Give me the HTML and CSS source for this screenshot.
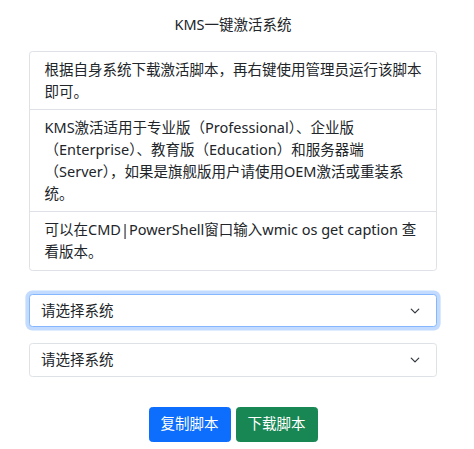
FILE: index.html
```html
<!DOCTYPE html>
<html lang="zh-CN">
<head>
<meta charset="utf-8">
<title>KMS一键激活系统</title>
<link rel="stylesheet" href="styles.css">
</head>
<body>
<div class="page">
  <div class="title">KMS一键激活系统</div>
  <ul class="list-group">
    <li class="list-item">根据自身系统下载激活脚本，再右键使用管理员运行该脚本即可。</li>
    <li class="list-item">KMS激活适用于专业版（Professional）、企业版（Enterprise）、教育版（Education）和服务器端（Server），如果是旗舰版用户请使用OEM激活或重装系统。</li>
    <li class="list-item">可以在CMD|PowerShell窗口输入wmic os get caption 查看版本。</li>
  </ul>
  <div class="select focused">
    <span class="select-text">请选择系统</span>
    <svg class="chevron" width="14" height="10" viewBox="0 0 16 16"><path d="M2 5l6 6 6-6" fill="none" stroke="#343a40" stroke-width="2" stroke-linecap="round" stroke-linejoin="round"/></svg>
  </div>
  <div class="select">
    <span class="select-text">请选择系统</span>
    <svg class="chevron" width="14" height="10" viewBox="0 0 16 16"><path d="M2 5l6 6 6-6" fill="none" stroke="#343a40" stroke-width="2" stroke-linecap="round" stroke-linejoin="round"/></svg>
  </div>
  <div class="buttons">
    <button class="btn btn-primary">复制脚本</button>
    <button class="btn btn-success">下载脚本</button>
  </div>
</div>
</body>
</html>
```

FILE: styles.css
```css
html, body {
  margin: 0;
  padding: 0;
  background: #fff;
}
body {
  font-family: "Noto Sans", "Noto Sans CJK SC", sans-serif;
  font-size: 14.5px;
  line-height: 21.75px;
  color: #212529;
}
.page {
  width: 408px;
  margin-left: 29px;
  padding-top: 14px;
}
.title {
  text-align: center;
  margin-bottom: 15px;
}
.list-group {
  list-style: none;
  margin: 0;
  padding: 0;
  border: 1px solid #dee2e6;
  border-radius: 3.4px;
}
.list-item {
  padding: 7px 14.5px 7px 14.5px;
  border-top: 1px solid #dee2e6;
}
.list-item:first-child {
  border-top: none;
}
.select {
  margin-top: 23px;
  display: flex;
  align-items: center;
  justify-content: space-between;
  height: 33.5px;
  box-sizing: border-box;
  padding: 0 14px 0 11px;
  border: 1px solid #dee2e6;
  border-radius: 3.4px;
  background: #fff;
}
.select + .select {
  margin-top: 16px;
}
.select.focused {
  border-color: #86b7fe;
  box-shadow: 0 0 0 3.6px rgba(13, 110, 253, 0.25);
}
.chevron {
  display: block;
}
.buttons {
  margin-top: 30px;
  display: flex;
  justify-content: center;
  gap: 5px;
}
.btn {
  font-family: inherit;
  font-size: 14.5px;
  line-height: 21.75px;
  padding: 5.5px 11px;
  border: 1px solid transparent;
  border-radius: 3.4px;
  color: #fff;
  cursor: pointer;
}
.btn-primary {
  background: #0d6efd;
  border-color: #0d6efd;
}
.btn-success {
  background: #198754;
  border-color: #198754;
}
```
